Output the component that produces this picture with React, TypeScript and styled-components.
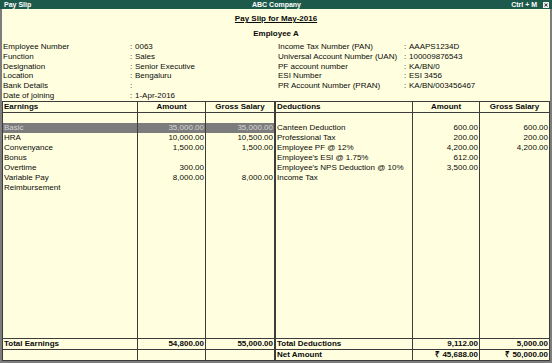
import React from "react";
import styled, { createGlobalStyle, css } from "styled-components";

const Global = createGlobalStyle`
  html, body { margin: 0; padding: 0; background: #ffffff; }
  body { font-family: "Liberation Sans", Arial, sans-serif; }
  * { box-sizing: border-box; }
`;

const Window = styled.div`
  width: 552px;
  height: 363px;
  display: flex;
  flex-direction: column;
  font-family: "Liberation Sans", Arial, sans-serif;
  font-size: 8px;
  color: #0a0a0a;
`;

const TitleBar = styled.div`
  height: 9px;
  background: #1e5a4b;
  color: #ffffff;
  font-weight: bold;
  font-size: 7px;
  line-height: 9px;
  display: grid;
  grid-template-columns: 1fr auto 1fr;
  align-items: center;
  padding: 0 3px 0 4px;
`;

const TitleRight = styled.div`
  display: flex;
  justify-content: flex-end;
  align-items: center;
  gap: 6px;
`;

const CloseBox = styled.svg`
  display: block;
  width: 6px;
  height: 6px;
`;

const Frame = styled.div`
  flex: 1;
  display: flex;
  flex-direction: column;
  background: #ffffdf;
  border-left: 2px solid #7d7d7d;
  border-right: 2px solid #7d7d7d;
  border-bottom: 2px solid #7d7d7d;
  min-height: 0;
`;

const Heading = styled.div`
  display: flex;
  flex-direction: column;
  align-items: center;
  padding-top: 5px;
  gap: 5px;
  height: 33px;
`;

const HeadTitle = styled.div`
  font-weight: bold;
  font-size: 8px;
  line-height: 10px;
  text-decoration: underline;
  text-underline-offset: 1px;
`;

const HeadName = styled.div`
  font-weight: bold;
  font-size: 8px;
  line-height: 10px;
`;

const Info = styled.div`
  display: grid;
  grid-template-columns: 127px 5px 143px 126px 5px 1fr;
  grid-auto-rows: 9.8px;
  line-height: 10px;
  padding-left: 1px;
  height: 59px;
`;

const InfoCell = styled.div`
  white-space: nowrap;
  overflow: visible;
`;

const Table = styled.div`
  flex: 1;
  display: grid;
  grid-template-columns: 136px 68px 70px 137px 67px 1fr;
  grid-template-rows: 12px 10px repeat(7, 10px) 1fr 11px 12px;
  line-height: 10px;
  min-height: 0;
`;

type Kind = "head" | "body" | "fill" | "total" | "net";

const Cell = styled.div<{
  $col: number;
  $kind: Kind;
  $align?: "left" | "right" | "center";
  $bold?: boolean;
  $hl?: boolean;
}>`
  white-space: nowrap;
  overflow: hidden;
  padding: 0 1px;
  text-align: ${(p) => p.$align ?? "left"};
  font-weight: ${(p) => (p.$bold ? "bold" : "normal")};
  border-right: ${(p) => (p.$col === 2 ? "2px" : "1px")} solid #3c3c3c;
  ${(p) => p.$col === 0 && css`border-left: 1px solid #3c3c3c;`}
  ${(p) =>
    p.$kind === "head" &&
    css`
      border-top: 1px solid #3c3c3c;
      border-bottom: 1px solid #3c3c3c;
    `}
  ${(p) => p.$kind === "total" && css`border-top: 1px solid #3c3c3c;`}
  ${(p) =>
    p.$kind === "net" &&
    css`
      border-top: 1px solid #3c3c3c;
      border-bottom: 1px solid #3c3c3c;
    `}
  ${(p) =>
    p.$hl &&
    css`
      background: #7c7c7c;
      color: #d6d6d6;
    `}
`;

const leftInfo: [string, string][] = [
  ["Employee Number", "0063"],
  ["Function", "Sales"],
  ["Designation", "Senior Executive"],
  ["Location", "Bengaluru"],
  ["Bank Details", ""],
  ["Date of joining", "1-Apr-2016"],
];

const rightInfo: [string, string][] = [
  ["Income Tax Number (PAN)", "AAAPS1234D"],
  ["Universal Account Number (UAN)", "100009876543"],
  ["PF account number", "KA/BN/0"],
  ["ESI Number", "ESI 3456"],
  ["PR Account Number (PRAN)", "KA/BN/003456467"],
];

const earnings: [string, string, string][] = [
  ["Basic", "35,000.00", "35,000.00"],
  ["HRA", "10,000.00", "10,500.00"],
  ["Convenyance", "1,500.00", "1,500.00"],
  ["Bonus", "", ""],
  ["Overtime", "300.00", ""],
  ["Variable Pay", "8,000.00", "8,000.00"],
  ["Reimbursement", "", ""],
];

const deductions: [string, string, string][] = [
  ["Canteen Deduction", "600.00", "600.00"],
  ["Professional Tax", "200.00", "200.00"],
  ["Employee PF @ 12%", "4,200.00", "4,200.00"],
  ["Employee's ESI @ 1.75%", "612.00", ""],
  ["Employee's NPS Deduction @ 10%", "3,500.00", ""],
  ["Income Tax", "", ""],
];

function Row({
  kind,
  cells,
  bold,
  hlLeft,
}: {
  kind: Kind;
  cells: string[];
  bold?: boolean;
  hlLeft?: boolean;
}) {
  return (
    <>
      {cells.map((c, i) => {
        const isLabel = i === 0 || i === 3;
        const align = isLabel ? "left" : kind === "head" ? "center" : "right";
        return (
          <Cell
            key={i}
            $col={i}
            $kind={kind}
            $align={align}
            $bold={bold}
            $hl={hlLeft && i < 3}
          >
            {c}
          </Cell>
        );
      })}
    </>
  );
}

export default function App() {
  const infoRows = leftInfo.map((l, i) => [l, rightInfo[i]] as const);
  return (
    <>
      <Global />
      <Window>
        <TitleBar>
          <span>Pay Slip</span>
          <span>ABC Company</span>
          <TitleRight>
            <span>Ctrl + M</span>
            <CloseBox viewBox="0 0 6 6">
              <rect x="0.5" y="0.5" width="5" height="5" fill="#d8d8d8" stroke="#f0f0f0" strokeWidth="1" />
              <path d="M1.6 1.6 L4.4 4.4 M4.4 1.6 L1.6 4.4" stroke="#333" strokeWidth="0.9" />
            </CloseBox>
          </TitleRight>
        </TitleBar>
        <Frame>
          <Heading>
            <HeadTitle>Pay Slip for May-2016</HeadTitle>
            <HeadName>Employee A</HeadName>
          </Heading>
          <Info>
            {infoRows.map(([l, r], i) => (
              <React.Fragment key={i}>
                <InfoCell>{l[0]}</InfoCell>
                <InfoCell>:</InfoCell>
                <InfoCell>{l[1]}</InfoCell>
                <InfoCell>{r ? r[0] : ""}</InfoCell>
                <InfoCell>{r ? ":" : ""}</InfoCell>
                <InfoCell>{r ? r[1] : ""}</InfoCell>
              </React.Fragment>
            ))}
          </Info>
          <Table>
            <Row
              kind="head"
              bold
              cells={["Earnings", "Amount", "Gross Salary", "Deductions", "Amount", "Gross Salary"]}
            />
            <Row kind="body" cells={["", "", "", "", "", ""]} />
            {earnings.map((e, i) => {
              const d = deductions[i] ?? ["", "", ""];
              return <Row key={i} kind="body" hlLeft={i === 0} cells={[...e, ...d]} />;
            })}
            <Row kind="fill" cells={["", "", "", "", "", ""]} />
            <Row
              kind="total"
              bold
              cells={["Total Earnings", "54,800.00", "55,000.00", "Total Deductions", "9,112.00", "5,000.00"]}
            />
            <Row
              kind="net"
              bold
              cells={["", "", "", "Net Amount", "₹ 45,688.00", "₹ 50,000.00"]}
            />
          </Table>
        </Frame>
      </Window>
    </>
  );
}
